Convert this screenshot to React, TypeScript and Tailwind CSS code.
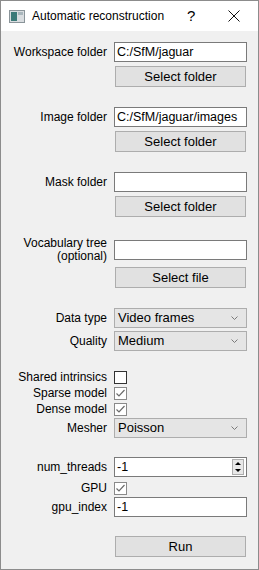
import React from "react";

const font = { fontFamily: '"Liberation Sans", Arial, sans-serif' };

function Label({ children }: { children: React.ReactNode }) {
  return (
    <div className="w-[97px] shrink-0 text-right text-[12px] leading-[13px] text-black">
      {children}
    </div>
  );
}

function Row({
  label,
  children,
  className = "",
}: {
  label?: React.ReactNode;
  children?: React.ReactNode;
  className?: string;
}) {
  return (
    <div className={`flex items-center gap-[7px] ${className}`}>
      <Label>{label}</Label>
      {children}
    </div>
  );
}

function TextInput({ value = "" }: { value?: string }) {
  return (
    <div className="flex h-[20px] w-[133px] items-center overflow-hidden border border-[#7a7a7a] bg-white pl-[2px] text-[12.5px] whitespace-nowrap text-black">
      {value}
    </div>
  );
}

function Button({ text }: { text: string }) {
  return (
    <div className="ml-[1px] flex h-[21px] w-[131px] items-center justify-center border border-[#adadad] bg-[#e1e1e1] text-[13px] text-black">
      {text}
    </div>
  );
}

function ButtonRow({ text, className = "" }: { text: string; className?: string }) {
  return (
    <div className={`flex gap-[7px] ${className}`}>
      <div className="w-[97px] shrink-0" />
      <Button text={text} />
    </div>
  );
}

function Combo({ value }: { value: string }) {
  return (
    <div className="flex h-[20px] w-[133px] items-center justify-between border border-[#adadad] bg-[#e5e5e5] pr-[8px] pl-[3px] text-[13px] text-black">
      <span>{value}</span>
      <svg width="7" height="4" viewBox="0 0 7 4">
        <path d="M0.5 0.5 L3.5 3.5 L6.5 0.5" fill="none" stroke="#7a7a7a" strokeWidth="1" />
      </svg>
    </div>
  );
}

function Check({ checked }: { checked: boolean }) {
  return (
    <div
      className={`flex h-[13px] w-[13px] items-center justify-center border bg-white ${
        checked ? "border-[#8a8a8a]" : "border-[#333333]"
      }`}
    >
      {checked && (
        <svg width="11" height="11" viewBox="0 0 11 11">
          <path d="M1.5 5.5 L4 8 L9.5 2" fill="none" stroke="#6b6b6b" strokeWidth="1.2" />
        </svg>
      )}
    </div>
  );
}

function CheckRow({ label, checked, className = "" }: { label: string; checked: boolean; className?: string }) {
  return (
    <Row label={label} className={`h-[16px] ${className}`}>
      <Check checked={checked} />
    </Row>
  );
}

export default function App() {
  return (
    <div style={font} className="flex h-[570px] w-[259px] flex-col border border-[#8c8c8c] bg-[#f0f0f0]">
      <div className="flex h-[30px] shrink-0 items-center bg-white">
        <svg className="ml-[8px]" width="16" height="13" viewBox="0 0 16 13">
          <rect x="0.5" y="0.5" width="15" height="12" fill="#d9dde0" stroke="#8a9499" />
          <rect x="2" y="2" width="6" height="9" fill="#3c7a78" />
          <rect x="9" y="2" width="5" height="3" fill="#a9b6bc" />
        </svg>
        <span className="ml-[7px] text-[12px] text-black">Automatic reconstruction</span>
        <span className="ml-[23px] text-[15px] text-black">?</span>
        <svg className="ml-[33px]" width="12" height="12" viewBox="0 0 12 12">
          <path d="M0.5 0.5 L11.5 11.5 M11.5 0.5 L0.5 11.5" stroke="#111" strokeWidth="1" />
        </svg>
      </div>

      <div className="flex flex-col pl-[9px]">
        <Row label="Workspace folder" className="mt-[11px]">
          <TextInput value="C:/SfM/jaguar" />
        </Row>
        <ButtonRow text="Select folder" className="mt-[4px]" />

        <Row label="Image folder" className="mt-[20px]">
          <TextInput value="C:/SfM/jaguar/images" />
        </Row>
        <ButtonRow text="Select folder" className="mt-[4px]" />

        <Row label="Mask folder" className="mt-[20px]">
          <TextInput />
        </Row>
        <ButtonRow text="Select folder" className="mt-[4px]" />

        <Row
          label={
            <>
              Vocabulary tree
              <br />
              (optional)
            </>
          }
          className="mt-[20px]"
        >
          <TextInput />
        </Row>
        <ButtonRow text="Select file" className="mt-[4px]" />

        <Row label="Data type" className="mt-[20px]">
          <Combo value="Video frames" />
        </Row>
        <Row label="Quality" className="mt-[3px]">
          <Combo value="Medium" />
        </Row>

        <CheckRow label="Shared intrinsics" checked={false} className="mt-[18px]" />
        <CheckRow label="Sparse model" checked />
        <CheckRow label="Dense model" checked />
        <Row label="Mesher" className="mt-[1px]">
          <Combo value="Poisson" />
        </Row>

        <Row label="num_threads" className="mt-[19px]">
          <div className="flex h-[20px] w-[133px] items-center justify-between border border-[#7a7a7a] bg-white pr-[2px] pl-[2px] text-[12.5px] text-black">
            <span>-1</span>
            <div className="flex h-[16px] w-[12px] flex-col items-center justify-around border border-[#adadad] bg-[#e8e8e8]">
              <svg width="6" height="3" viewBox="0 0 6 3">
                <path d="M0 3 L3 0 L6 3 Z" fill="#000" />
              </svg>
              <svg width="6" height="3" viewBox="0 0 6 3">
                <path d="M0 0 L6 0 L3 3 Z" fill="#000" />
              </svg>
            </div>
          </div>
        </Row>
        <CheckRow label="GPU" checked className="mt-[3px]" />
        <Row label="gpu_index" className="mt-[1px]">
          <TextInput value="-1" />
        </Row>

        <ButtonRow text="Run" className="mt-[19px]" />
      </div>
    </div>
  );
}
